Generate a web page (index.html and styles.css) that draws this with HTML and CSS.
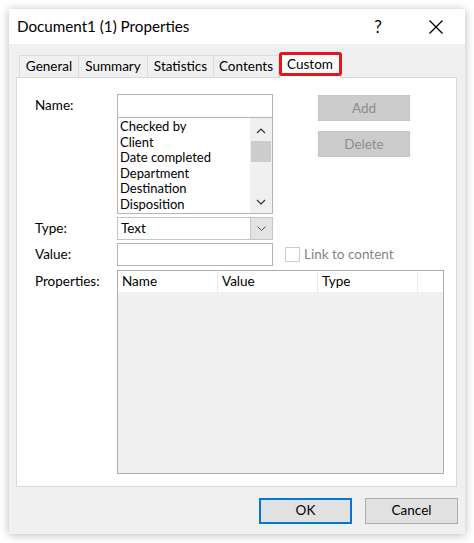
FILE: index.html
```html
<!DOCTYPE html>
<html>
<head>
<meta charset="utf-8">
<link rel="stylesheet" href="styles.css">
</head>
<body>
<div class="window">
  <div class="titlebar">
    <span class="title">Document1 (1) Properties</span>
    <span class="help">?</span>
    <span class="close"><svg width="16" height="16" viewBox="0 0 16 16"><path d="M1.5 1.5 L14.5 14.5 M14.5 1.5 L1.5 14.5" stroke="#000" stroke-width="1.3" fill="none"/></svg></span>
  </div>
  <div class="content">
    <div class="tabs">
      <div class="tab t-general">General</div>
      <div class="tab t-summary">Summary</div>
      <div class="tab t-stats">Statistics</div>
      <div class="tab t-contents">Contents</div>
      <div class="tab t-custom active">Custom<span class="highlight"></span></div>
    </div>
    <div class="panel">
      <div class="form">
        <div class="label l-name">Name:</div>
        <div class="namebox">
          <div class="input"></div>
          <div class="listbox">
            <div class="items">
              <div>Checked by</div>
              <div>Client</div>
              <div>Date completed</div>
              <div>Department</div>
              <div>Destination</div>
              <div>Disposition</div>
            </div>
            <div class="scrollbar">
              <svg class="arrow up" width="10" height="6" viewBox="0 0 10 6"><path d="M1 5 L5 1 L9 5" stroke="#333" stroke-width="1.2" fill="none"/></svg>
              <div class="thumb"></div>
              <svg class="arrow down" width="10" height="6" viewBox="0 0 10 6"><path d="M1 1 L5 5 L9 1" stroke="#333" stroke-width="1.2" fill="none"/></svg>
            </div>
          </div>
        </div>
        <div class="buttons">
          <div class="btn disabled">Add</div>
          <div class="btn disabled">Delete</div>
        </div>

        <div class="label l-type">Type:</div>
        <div class="combo">
          <span class="combo-text">Text</span>
          <span class="combo-btn"><svg width="9" height="5" viewBox="0 0 9 5"><path d="M0.5 0.5 L4.5 4.5 L8.5 0.5" stroke="#555" stroke-width="1" fill="none"/></svg></span>
        </div>

        <div class="label l-value">Value:</div>
        <div class="input value-input"></div>
        <div class="link">
          <span class="checkbox"></span>
          <span class="link-text">Link to content</span>
        </div>

        <div class="label l-props">Properties:</div>
        <div class="table">
          <div class="thead">
            <div class="th">Name</div>
            <div class="th">Value</div>
            <div class="th">Type</div>
            <div class="th last"></div>
          </div>
        </div>
      </div>
    </div>
    <div class="footer">
      <div class="fbtn ok">OK</div>
      <div class="fbtn cancel">Cancel</div>
    </div>
  </div>
</div>
</body>
</html>
```

FILE: styles.css
```css
* { box-sizing: border-box; }
html, body { margin: 0; padding: 0; background: #fff; }
body {
  font-family: Lato, "Noto Sans", sans-serif;
  font-size: 13.5px;
  color: #000;
  width: 474px;
  height: 543px;
  overflow: hidden;
}
.window {
  margin: 9px 0 0 9px;
  width: 456px;
  height: 525px;
  background: #f0f0f0;
  box-shadow: 0 1px 9px rgba(0,0,0,0.28);
  display: flex;
  flex-direction: column;
}
.titlebar {
  height: 35px;
  background: #fff;
  display: flex;
  align-items: center;
  padding-left: 8px;
}
.title { font-size: 15.2px; flex: 1; margin-top: -1px; }
.help { font-size: 17px; width: 20px; margin-right: 40px; text-align: center; }
.close { width: 16px; height: 16px; margin-right: 21px; display: flex; }
.content {
  flex: 1;
  padding: 0 7px 0 7px;
  display: flex;
  flex-direction: column;
}
.tabs {
  display: flex;
  align-items: flex-end;
  height: 33px;
  padding-left: 3px;
}
.tab {
  height: 22px;
  line-height: 21px;
  text-align: center;
  border: 1px solid #dcdcdc;
  border-bottom: none;
  margin-right: -1px;
  background: #f0f0f0;
  position: relative;
}
.t-general { width: 60px; }
.t-summary { width: 70px; }
.t-stats { width: 67px; }
.t-contents { width: 66px; }
.t-custom { width: 62px; }
.tab.active {
  background: #fff;
  height: 25px;
  line-height: 20px;
  margin-left: 1px;
  z-index: 2;
  margin-bottom: -1px;
  border-color: #d9d9d9;
}
.highlight {
  position: absolute;
  left: -1px;
  right: -2px;
  top: -2px;
  bottom: 2px;
  border: 3px solid #e8141b;
  border-radius: 3px;
}
.panel {
  width: 441px;
  height: 410px;
  background: #fff;
  border: 1px solid #d9d9d9;
  padding: 16px 0 0 18px;
}
.form {
  display: grid;
  grid-template-columns: 82px 156px 45px 92px;
  grid-template-rows: 119px 23px 23px 203px;
  row-gap: 0;
}
.label { line-height: 23px; }
.namebox { grid-column: 2; grid-row: 1; }
.input {
  height: 24px;
  border: 1px solid #b4b4b4;
  background: #fff;
}
.listbox {
  height: 96px;
  border: 1px solid #b4b4b4;
  border-top: none;
  display: flex;
}
.items {
  flex: 1;
  padding: 1px 0 0 2px;
  line-height: 15.6px;
  font-size: 13px;
}
.scrollbar {
  width: 22px;
  background: #f0f0f0;
  position: relative;
  display: flex;
  flex-direction: column;
  align-items: center;
}
.arrow.up { margin-top: 10px; }
.thumb {
  width: 20px;
  height: 21px;
  background: #cdcdcd;
  margin-top: 7px;
}
.arrow.down { margin-top: auto; margin-bottom: 8px; }
.buttons {
  grid-column: 4;
  grid-row: 1;
  display: flex;
  flex-direction: column;
  gap: 10px;
  margin-top: 1px;
}
.btn {
  height: 26px;
  line-height: 25px;
  text-align: center;
  background: #cccccc;
  border: 1px solid #c4c4c4;
  color: #8d8d8d;
}
.l-type { grid-column: 1; grid-row: 2; margin-top: 4px; }
.combo {
  grid-column: 2; grid-row: 2;
  margin-top: 4px;
  height: 23px;
  border: 1px solid #c4c4c4;
  background: #fff;
  display: flex;
}
.combo-text { flex: 1; padding-left: 3px; line-height: 20px; }
.combo-btn {
  width: 22px;
  background: #e3e3e3;
  border-left: 1px solid #c8c8c8;
  display: flex;
  align-items: center;
  justify-content: center;
}
.l-value { grid-column: 1; grid-row: 3; margin-top: 7px; }
.value-input { grid-column: 2; grid-row: 3; margin-top: 7px; height: 23px; }
.link {
  grid-column: 3 / span 2;
  grid-row: 3;
  margin-top: 10px;
  margin-left: 12px;
  display: flex;
  align-items: center;
  height: 16px;
  white-space: nowrap;
}
.checkbox {
  width: 15px; height: 15px;
  border: 1px solid #cccccc;
  background: #fff;
  margin-right: 4px;
}
.link-text { color: #858585; }
.l-props { grid-column: 1; grid-row: 4; margin-top: 12px; line-height: 21px; }
.table {
  grid-column: 2 / span 3;
  grid-row: 4;
  margin-top: 11px;
  width: 327px;
  height: 204px;
  border: 1px solid #acacac;
  background: #f0f0f0;
}
.thead {
  display: flex;
  height: 21px;
  background: #fff;
}
.th {
  width: 100px;
  border-right: 1px solid #eaeaea;
  padding-left: 4px;
  line-height: 20px;
}
.th.last { flex: 1; border-right: none; }
.footer {
  display: flex;
  justify-content: flex-end;
  gap: 13px;
  padding-top: 11px;
}
.fbtn {
  width: 93px;
  height: 26px;
  line-height: 23px;
  text-align: center;
  background: #e1e1e1;
  border: 1px solid #adadad;
}
.fbtn.ok { border: 2px solid #0078d7; line-height: 21px; }
```
